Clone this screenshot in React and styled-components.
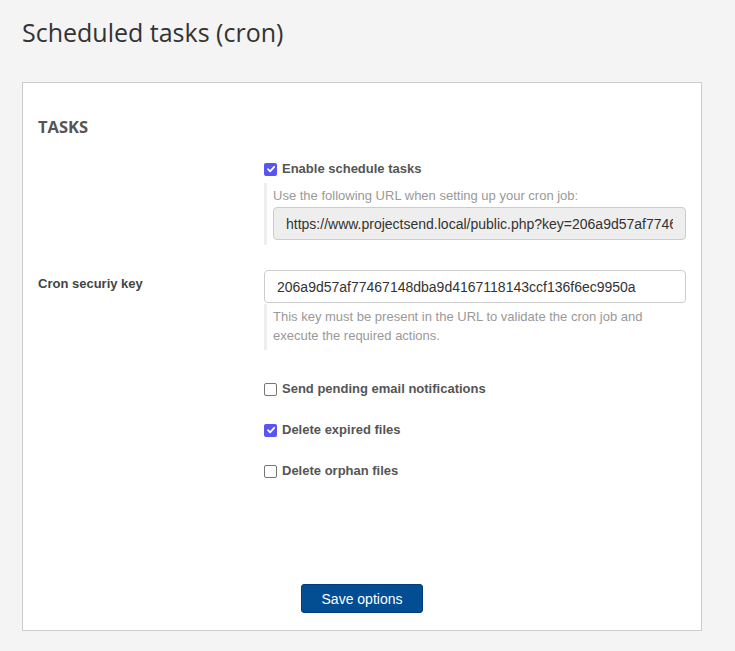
import React, { useState } from "react";
import styled, { createGlobalStyle } from "styled-components";

const Global = createGlobalStyle`
  html, body { margin: 0; padding: 0; background: #f4f4f4; }
  body { font-family: "Liberation Sans", Arial, sans-serif; font-size: 13px; color: #333; }
  * { box-sizing: border-box; }
`;

const Page = styled.div`
  padding: 15px 22px 20px 22px;
  width: 735px;
`;

const Title = styled.h1`
  margin: 0 0 33px 0;
  font-family: "Open Sans", sans-serif;
  font-weight: 400;
  font-size: 25px;
  line-height: 34px;
  color: #333;
`;

const Panel = styled.div`
  width: 680px;
  height: 549px;
  background: #fff;
  border: 1px solid #ccc;
  padding: 33px 15px 0 15px;
  display: flex;
  flex-direction: column;
`;

const SectionTitle = styled.h3`
  margin: 0 0 22px 0;
  font-family: "Open Sans", sans-serif;
  font-weight: 700;
  font-size: 16.5px;
  line-height: 22px;
  color: #555;
  text-transform: uppercase;
`;

const Row = styled.div`
  display: grid;
  grid-template-columns: 226px 452px;
  margin: 0 -15px ${(p) => p.$mb || 0}px -15px;
`;

const LabelCell = styled.div`
  padding: ${(p) => p.$pt || 0}px 15px 0 15px;
  font-weight: 700;
  font-size: 13px;
  color: #444;
`;

const FieldCell = styled.div`
  padding: 0 15px;
`;

const CheckLabel = styled.label`
  display: flex;
  align-items: center;
  gap: 5px;
  font-weight: 700;
  font-size: 13px;
  line-height: 18px;
  color: #555;
  cursor: pointer;
`;

const Box = styled.span`
  width: 13px;
  height: 13px;
  border-radius: 2px;
  flex: none;
  display: flex;
  align-items: center;
  justify-content: center;
  background: ${(p) => (p.$on ? "#5a55f2" : "#fff")};
  border: ${(p) => (p.$on ? "none" : "1.5px solid #767676")};
`;

const Help = styled.div`
  margin-top: ${(p) => p.$mt || 0}px;
  border-left: 3px solid #eee;
  padding: 3px 0 5px 6px;
  color: #999;
  font-size: 13px;
  line-height: 19px;
`;

const TextInput = styled.input`
  display: block;
  width: 100%;
  height: 33px;
  margin-top: ${(p) => p.$mt || 0}px;
  padding: 0 12px;
  border: 1px solid #ccc;
  border-radius: 4px;
  background: ${(p) => (p.readOnly ? "#eee" : "#fff")};
  font-family: "Liberation Sans", Arial, sans-serif;
  font-size: 14px;
  color: #333;
  outline: none;
`;

const Footer = styled.div`
  margin-top: auto;
  padding-bottom: 17px;
  display: flex;
  justify-content: center;
`;

const SaveButton = styled.button`
  width: 122px;
  height: 29px;
  background: #034d93;
  border: 1px solid #023f7a;
  border-radius: 3px;
  color: #fff;
  font-family: "Liberation Sans", Arial, sans-serif;
  font-size: 14px;
  cursor: pointer;
`;

function Check({ label, initial }) {
  const [on, setOn] = useState(initial);
  return (
    <CheckLabel onClick={() => setOn(!on)}>
      <Box $on={on}>
        {on && (
          <svg width="10" height="10" viewBox="0 0 10 10">
            <path d="M2 5.2 L4.1 7.3 L8.2 2.8" fill="none" stroke="#fff" strokeWidth="1.8" strokeLinecap="round" strokeLinejoin="round" />
          </svg>
        )}
      </Box>
      {label}
    </CheckLabel>
  );
}

export default function App() {
  const key = "206a9d57af77467148dba9d4167118143ccf136f6ec9950a";
  return (
    <Page>
      <Global />
      <Title>Scheduled tasks (cron)</Title>
      <Panel>
        <SectionTitle>Tasks</SectionTitle>
        <Row $mb={25}>
          <LabelCell />
          <FieldCell>
            <Check label="Enable schedule tasks" initial={true} />
            <Help $mt={5}>
              Use the following URL when setting up your cron job:
              <TextInput $mt={2} readOnly value={`https://www.projectsend.local/public.php?key=${key}`} />
            </Help>
          </FieldCell>
        </Row>
        <Row $mb={30}>
          <LabelCell $pt={6}>Cron securiy key</LabelCell>
          <FieldCell>
            <TextInput defaultValue={key} />
            <Help $mt={1}>
              This key must be present in the URL to validate the cron job and execute the required actions.
            </Help>
          </FieldCell>
        </Row>
        <Row $mb={23}>
          <LabelCell />
          <FieldCell>
            <Check label="Send pending email notifications" initial={false} />
          </FieldCell>
        </Row>
        <Row $mb={23}>
          <LabelCell />
          <FieldCell>
            <Check label="Delete expired files" initial={true} />
          </FieldCell>
        </Row>
        <Row>
          <LabelCell />
          <FieldCell>
            <Check label="Delete orphan files" initial={false} />
          </FieldCell>
        </Row>
        <Footer>
          <SaveButton type="button">Save options</SaveButton>
        </Footer>
      </Panel>
    </Page>
  );
}
